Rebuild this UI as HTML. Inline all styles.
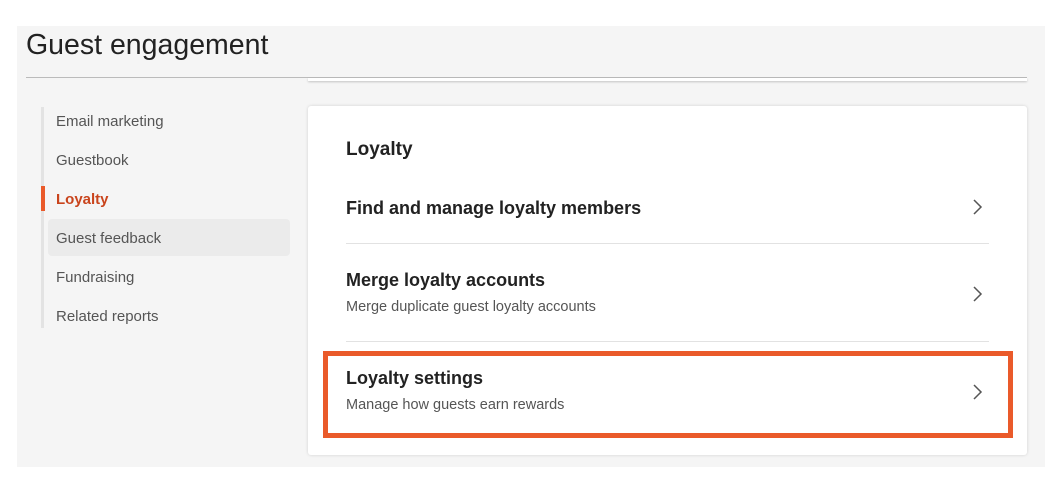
<html><head><style>
body{margin:0;width:1064px;height:484px;background:#fff;font-family:"Liberation Sans",sans-serif;position:relative;overflow:hidden}
.bg{position:absolute;left:17px;top:26px;width:1028px;height:441px;background:#f5f5f5}
.t{position:absolute;left:26px;top:29px;font-size:28.5px;color:#222}
.hl{position:absolute;left:26px;top:77px;width:1001px;height:1px;background:#bbb}
.strip{position:absolute;left:308px;top:78px;width:719px;height:3px;background:#fff;box-shadow:0 1px 2px rgba(0,0,0,.2)}
.sb{position:absolute;left:41px;top:107px;width:3px;height:221px;background:#e3e3e3}
.act{position:absolute;left:41px;top:186px;width:4px;height:25px;background:#ea5a2a}
.hov{position:absolute;left:48px;top:219px;width:242px;height:37px;background:#ebebeb;border-radius:4px}
.it{position:absolute;left:56px;font-size:15px;color:#555;line-height:20px}
.card{position:absolute;left:308px;top:106px;width:719px;height:349px;background:#fff;border-radius:3px;box-shadow:0 0 3px rgba(0,0,0,.15)}
.h{position:absolute;left:346px;font-size:19px;font-weight:bold;color:#222;line-height:24px}
.s{position:absolute;left:346px;font-size:14.5px;color:#555;line-height:20px}
.dv{position:absolute;left:346px;width:643px;height:1px;background:#e2e2e2}
.ch{position:absolute;left:972px}
.red{position:absolute;left:323px;top:351px;width:680px;height:77px;border:5px solid #ea5a2a}
</style></head><body>
<div class="bg"></div>
<div class="t">Guest engagement</div>
<div class="hl"></div>
<div class="strip"></div>
<div class="sb"></div><div class="act"></div><div class="hov"></div>
<div class="it" style="top:112px">Email marketing</div>
<div class="it" style="top:151px">Guestbook</div>
<div class="it" style="top:190px;color:#c9441c;font-weight:bold">Loyalty</div>
<div class="it" style="top:229px">Guest feedback</div>
<div class="it" style="top:268px">Fundraising</div>
<div class="it" style="top:307px">Related reports</div>
<div class="card"></div>
<div class="h" style="top:138px">Loyalty</div>
<div class="h" style="top:196px;font-size:18px">Find and manage loyalty members</div>
<div class="dv" style="top:243px"></div>
<div class="h" style="top:268px;font-size:18px">Merge loyalty accounts</div>
<div class="s" style="top:297px">Merge duplicate guest loyalty accounts</div>
<div class="dv" style="top:341px"></div>
<div class="h" style="top:366px;font-size:18px">Loyalty settings</div>
<div class="s" style="top:395px">Manage how guests earn rewards</div>
<svg class="ch" style="top:199px" width="12" height="16"><path d="M2 1l7 7-7 7" fill="none" stroke="#555" stroke-width="1.5"/></svg>
<svg class="ch" style="top:286px" width="12" height="16"><path d="M2 1l7 7-7 7" fill="none" stroke="#555" stroke-width="1.5"/></svg>
<svg class="ch" style="top:384px" width="12" height="16"><path d="M2 1l7 7-7 7" fill="none" stroke="#555" stroke-width="1.5"/></svg>
<div class="red"></div>
</body></html>
